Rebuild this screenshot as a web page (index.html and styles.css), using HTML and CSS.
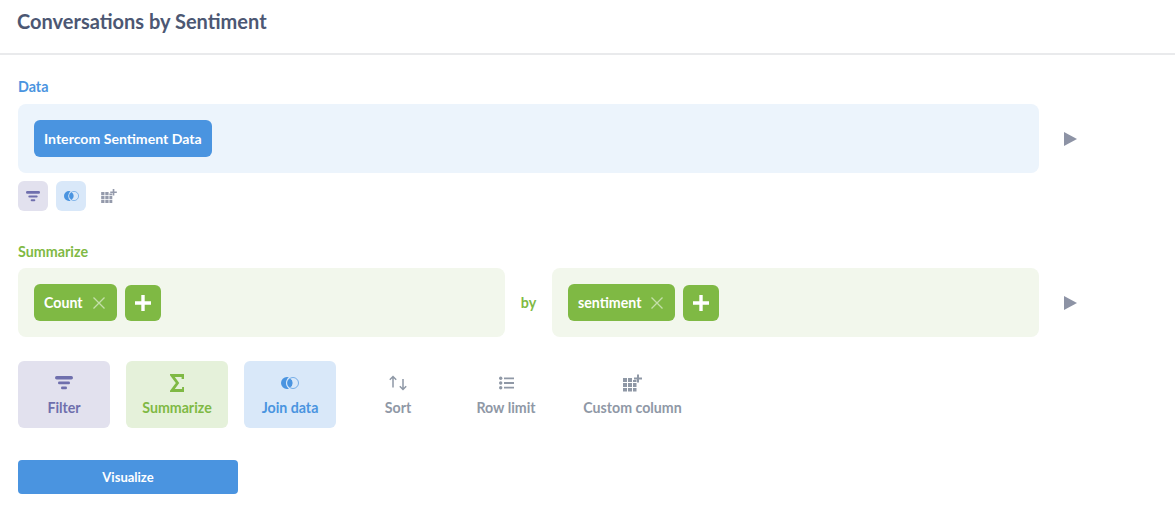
FILE: index.html
```html
<!DOCTYPE html>
<html lang="en">
<head>
<meta charset="utf-8">
<title>Conversations by Sentiment</title>
<link rel="stylesheet" href="styles.css">
</head>
<body>
<svg class="defs" width="0" height="0" aria-hidden="true">
  <symbol id="i-filter" viewBox="0 0 18 14">
    <rect x="0" y="0" width="18" height="3.4" rx="1.7" fill="currentColor"/>
    <rect x="3" y="5.6" width="12" height="2.6" rx="1.3" fill="currentColor"/>
    <rect x="6" y="10.6" width="6" height="2.6" rx="1.3" fill="currentColor"/>
  </symbol>
  <symbol id="i-join" viewBox="0 0 18 12">
    <path d="M6 0a6 6 0 1 0 0 12a6 6 0 0 0 1.900-.33a7 7 0 0 1 0-11.340A6 6 0 0 0 6 0z" fill="currentColor"/>
    <path d="M9 1.600a5 5 0 0 1 0 8.800a5 5 0 0 1 0-8.800z" fill="currentColor"/>
    <circle cx="12" cy="6" r="5.500" fill="none" stroke="currentColor" stroke-width="1" opacity=".7"/>
  </symbol>
  <symbol id="i-custom" viewBox="0 0 19 17">
    <path d="M0 3.500h4v4H0zM5 3.500h4v4H5zM10 5.500h3.500v2H10zM0 8.500h4v4H0zM5 8.500h4v4H5zM10 8.500h3.500v4H10zM0 13.500h4V17H0zM5 13.500h4V17H5zM10 13.500h3.500V17H10z" fill="currentColor"/>
    <path d="M14 0h2v3h3v2h-3v3h-2V5h-3V3h3z" fill="currentColor"/>
  </symbol>
</svg>

<header class="title-bar">
  <h1 class="title">Conversations by Sentiment</h1>
</header>

<main class="editor">
  <section class="step">
    <div class="step-label label-blue">Data</div>
    <div class="step-row">
      <div class="panel panel-blue panel-full">
        <span class="pill pill-blue">Intercom Sentiment Data</span>
      </div>
      <span class="play" aria-label="Run"></span>
    </div>
    <div class="mini-actions">
      <span class="mini mini-purple"><svg class="mini-icon" width="14" height="11"><use href="#i-filter"/></svg></span>
      <span class="mini mini-blue"><svg class="mini-icon" width="15" height="10"><use href="#i-join"/></svg></span>
      <span class="mini mini-grey"><svg class="mini-icon" width="16" height="14"><use href="#i-custom"/></svg></span>
    </div>
  </section>

  <section class="step step-summarize">
    <div class="step-label label-green">Summarize</div>
    <div class="step-row">
      <div class="panel panel-green panel-half">
        <span class="pill pill-green">Count
          <svg class="close" width="12" height="12" viewBox="0 0 12 12"><path d="M.5.5l11 11M11.500.5l-11 11" stroke="currentColor" stroke-width="1.300" fill="none"/></svg>
        </span>
        <span class="add">
          <svg width="16" height="16" viewBox="0 0 16 16"><path d="M8 0v16M0 8h16" stroke="currentColor" stroke-width="3.400" fill="none"/></svg>
        </span>
      </div>
      <span class="by">by</span>
      <div class="panel panel-green panel-half">
        <span class="pill pill-green">sentiment
          <svg class="close" width="12" height="12" viewBox="0 0 12 12"><path d="M.5.5l11 11M11.500.5l-11 11" stroke="currentColor" stroke-width="1.300" fill="none"/></svg>
        </span>
        <span class="add">
          <svg width="16" height="16" viewBox="0 0 16 16"><path d="M8 0v16M0 8h16" stroke="currentColor" stroke-width="3.400" fill="none"/></svg>
        </span>
      </div>
      <span class="play" aria-label="Run"></span>
    </div>
  </section>

  <div class="actions">
    <div class="action action-purple">
      <svg class="action-icon" width="18" height="14"><use href="#i-filter"/></svg>
      <span>Filter</span>
    </div>
    <div class="action action-green">
      <svg class="action-icon" width="14" height="18" viewBox="0 0 14 18"><path d="M13 5V1.500H2L7.500 9 2 16.500h11.500V13" fill="none" stroke="currentColor" stroke-width="2.800"/></svg>
      <span>Summarize</span>
    </div>
    <div class="action action-blue">
      <svg class="action-icon" width="18" height="12"><use href="#i-join"/></svg>
      <span>Join data</span>
    </div>
    <div class="action action-plain">
      <svg class="action-icon" width="18" height="15" viewBox="0 0 18 15"><path d="M4 12V1M.8 4.200L4 1l3.200 3.200M14 3.500V14M10.800 10.800L14 14l3.200-3.200" fill="none" stroke="currentColor" stroke-width="1.500"/></svg>
      <span>Sort</span>
    </div>
    <div class="action action-plain">
      <svg class="action-icon" width="15" height="13" viewBox="0 0 15 13"><circle cx="1.700" cy="1.800" r="1.700" fill="currentColor"/><circle cx="1.700" cy="6.500" r="1.700" fill="currentColor"/><circle cx="1.700" cy="11.200" r="1.700" fill="currentColor"/><path d="M5 1.800h10M5 6.500h10M5 11.200h10" stroke="currentColor" stroke-width="1.800"/></svg>
      <span>Row limit</span>
    </div>
    <div class="action action-plain action-wide">
      <svg class="action-icon" width="19" height="17"><use href="#i-custom"/></svg>
      <span>Custom column</span>
    </div>
  </div>

  <button class="visualize" type="button">Visualize</button>
</main>
</body>
</html>
```

FILE: styles.css
```css
* { box-sizing: border-box; }

html, body { margin: 0; padding: 0; }

body {
  width: 1175px;
  height: 516px;
  overflow: hidden;
  background: #fff;
  font-family: Lato, "Noto Sans", sans-serif;
  font-weight: 700;
}

.defs { position: absolute; }

.title-bar {
  height: 55px;
  padding: 9px 17px 0;
  border-bottom: 2px solid #e9eaec;
}

.title {
  margin: 0;
  font-size: 20px;
  line-height: 24px;
  font-weight: 700;
  color: #4c5773;
}

.editor { padding: 0 18px; }

.step { padding-top: 23px; }

.step-summarize { padding-top: 32px; }

.step-label {
  font-size: 14.300px;
  line-height: 17px;
  margin-bottom: 9px;
}

.step-summarize .step-label { margin-bottom: 8px; }

.label-blue { color: #4a94e0; }
.label-green { color: #7fb944; }

.step-row {
  display: flex;
  align-items: center;
}

.panel {
  height: 69px;
  border-radius: 8px;
  padding: 16px;
  display: flex;
  align-items: flex-start;
  gap: 8px;
}

.panel-blue { background: #ecf4fc; }
.panel-green { background: #f2f7ec; }
.panel-full { width: 1021px; }
.panel-half { width: 487px; }

.pill {
  display: inline-flex;
  align-items: center;
  height: 37px;
  padding: 0 10px;
  border-radius: 6px;
  color: #fff;
  font-size: 14.100px;
  white-space: nowrap;
}

.pill-blue { background: #4a94e0; }
.pill-green { background: #7fb944; font-size: 14.200px; }

.close {
  margin-left: 10px;
  margin-right: 2px;
  color: rgba(255, 255, 255, .55);
}

.add {
  margin-top: 1px;
  width: 36px;
  height: 36px;
  border-radius: 6px;
  background: #7fb944;
  color: #fff;
  display: flex;
  align-items: center;
  justify-content: center;
}

.by {
  width: 47px;
  text-align: center;
  color: #7fb944;
  font-size: 14.300px;
}

.play {
  width: 0;
  height: 0;
  margin-left: 25px;
  border-left: 13px solid #8d93a5;
  border-top: 7px solid transparent;
  border-bottom: 7px solid transparent;
}

.mini-actions {
  display: flex;
  gap: 8px;
  margin-top: 8px;
}

.mini {
  width: 30px;
  height: 30px;
  border-radius: 6px;
  display: flex;
  align-items: center;
  justify-content: center;
}

.mini-purple { background: #e2e1ee; color: #6f6fad; }
.mini-blue { background: #d9e8f9; color: #4a94e0; }
.mini-grey { color: #949aab; }

.actions {
  display: flex;
  gap: 16px;
  margin-top: 24px;
}

.action {
  width: 92px;
  height: 67px;
  border-radius: 6px;
  display: flex;
  flex-direction: column;
  align-items: center;
  font-size: 14.200px;
  line-height: 17px;
  padding-top: 13px;
}

.action-icon {
  height: 18px;
  margin-bottom: 7px;
  display: block;
}

.action-purple { background: #e2e1ee; color: #6f6fad; }
.action-green { width: 102px; background: #e5f1da; color: #7fb944; }
.action-blue { background: #d9e8f9; color: #4a94e0; }
.action-plain { color: #8f98a6; }
.action-wide { width: 129px; }

.visualize {
  display: block;
  width: 220px;
  height: 34px;
  margin: 32px 0 0;
  border: 0;
  border-radius: 4px;
  background: #4a94e0;
  color: #fff;
  font: 700 13px Lato, "Noto Sans", sans-serif;
}
```
